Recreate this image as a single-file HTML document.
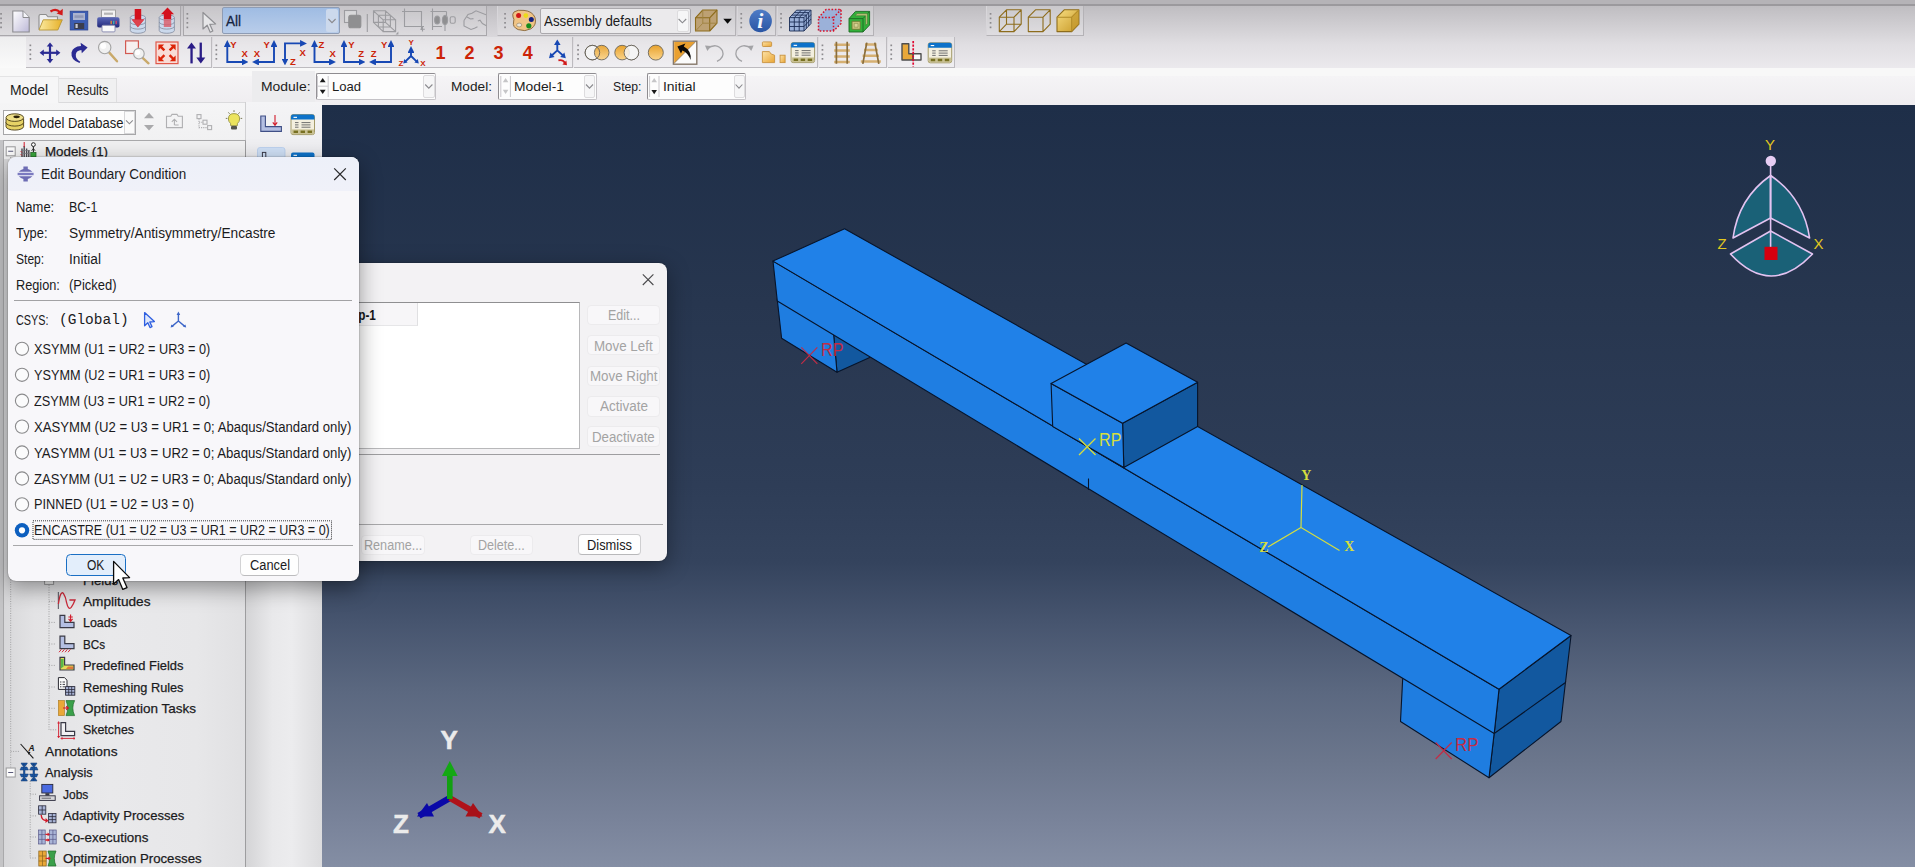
<!DOCTYPE html>
<html><head><meta charset="utf-8"><title>Abaqus/CAE</title>
<style>
html,body{margin:0;padding:0}
body{width:1915px;height:867px;position:relative;overflow:hidden;background:#f3f3f5;font-family:"Liberation Sans",sans-serif;font-size:13px;color:#1c1c1c}
.a{position:absolute}
.t{position:absolute;white-space:pre;line-height:16px;height:16px;font-size:13px;transform-origin:0 50%}
.g{color:#a3a3a3}
svg{position:absolute;overflow:visible}
#vp{left:322px;top:105px;width:1593px;height:762px;background:linear-gradient(to bottom,#1e2e48 0%,#27364f 26%,#2e3d57 50%,#34435d 60%,#47556f 68%,#5b6880 77%,#6b768c 86%,#79839a 94%,#848ea4 100%)}
.vl{position:absolute;white-space:pre;transform-origin:0 50%;font-family:"Liberation Sans",sans-serif}
.tg{box-sizing:border-box;border:1px solid #a9a7ab;border-top:none;background:rgba(255,255,255,0.12)}
.tg2{box-sizing:border-box;border:1px solid #b4b2b6;border-top:none;border-left-color:#d8d6da;background:rgba(255,255,255,0.18)}
.tg3{box-sizing:border-box;border-right:1px solid #bdbbbf;border-bottom:1.5px solid #bdbbbf;background:rgba(255,255,255,0.25)}
.cb{box-sizing:border-box;border:1px solid #aaa8ac;background:#ebeaec;border-radius:2px}
.cb2{box-sizing:border-box;border:1.5px solid #8e8c90;border-right-color:#c4c2c6;border-bottom-color:#c4c2c6;background:#fdfdfd;border-radius:2px}
.cbb{background:#f6f6f7;border:1px solid #dddcde;box-sizing:border-box;border-radius:2px}
.tr{font-size:13.5px;color:#1b1b1d;-webkit-text-stroke:0.25px #1b1b1d}
.d{font-size:14px;color:#1b1b1d}
.b2{box-sizing:border-box;border:1px solid #ecebed;border-radius:4px;background:#f8f7f9}
</style></head><body>
<!--VIEWPORT-->
<div id="vp" class="a"></div>
<svg style="left:0;top:0" width="1915" height="867" viewBox="0 0 1915 867">
<g stroke="#07142a" stroke-width="1.1" stroke-linejoin="round">
<!-- left support -->
<polygon fill="#12589f" points="833.5,333 837,372.3 908.5,340 905.5,302"/>
<polygon fill="#1f7de0" points="777.2,299 781.6,338.2 837,372.3 833.5,333"/>
<!-- right support -->
<polygon fill="#12589f" points="1494.3,732 1489,777.7 1561,721.5 1565.6,681"/>
<polygon fill="#1f7de0" points="1402.8,676.5 1400.5,721.5 1489,777.7 1494.3,732"/>
<!-- main beam -->
<polygon fill="#12589f" points="1499,689.2 1494.2,733.5 1565.5,682.5 1571,635.5"/>
<polygon fill="#1f7ee2" points="773,261.1 1499,689.2 1494.2,733.5 777.3,301"/>
<polygon fill="#2081e8" points="773,261.1 844.6,228.8 1571,635.5 1499,689.2"/>
<!-- middle block -->
<polygon fill="#12589f" points="1122.6,423.3 1197.6,382.3 1197.6,426.5 1123.8,467.6"/>
<polygon fill="#1f7ee2" points="1051.1,383.4 1122.6,423.3 1123.8,467.6 1052.7,426.5"/>
<polygon fill="#2081e8" points="1051.1,383.4 1126.1,343.1 1197.6,382.3 1122.6,423.3"/>
<line x1="1088.5" y1="478.5" x2="1088.5" y2="490"/>
</g>
<!-- RPs -->
<g stroke="#c22c46" stroke-width="1.15"><path d="M801.3,347.3 L817.3,363.8 M817.3,347.3 L801.3,363.8"/><path d="M1435.7,742.5 L1451.7,759 M1451.7,742.5 L1435.7,759"/></g>
<g stroke="#d6de3e" stroke-width="1.3"><path d="M1079,438.5 L1095.5,455 M1095.5,438.5 L1079,455"/></g>
<!-- datum csys -->
<g stroke="#d6de3e" stroke-width="1.2" fill="none"><path d="M1302,485 L1301,527.5 L1339.5,550.5 M1301,527.5 L1268,547"/></g>
<!-- view compass -->
<g stroke="#e3c3f1" stroke-width="1.6" fill="#1a6177" stroke-linejoin="round">
<path d="M1770.6,175.5 Q1738.5,198 1733,238 L1770.6,218 Z"/>
<path d="M1770.6,175.5 Q1803.5,198 1809.6,238 L1770.6,218 Z"/>
<path d="M1770.6,231 L1730.5,254 Q1771,298 1812.5,254 Z"/>
<line x1="1770.6" y1="163" x2="1770.6" y2="250"/>
</g>
<circle cx="1770.8" cy="161" r="5.2" fill="#e6cdf3"/>
<rect x="1764.5" y="246.8" width="13" height="13.2" fill="#d4000f"/>
<!-- orientation triad -->
<g>
<path d="M449.8,798 L419,815.8" stroke="#0a08a8" stroke-width="6.3"/>
<polygon points="417,816.5 434,816.5 427,803" fill="#0a08a8"/>
<path d="M449.8,798 L481,815.8" stroke="#b0121a" stroke-width="6"/>
<polygon points="482.5,816.5 465.5,816.5 473,803" fill="#a81018"/>
<rect x="447" y="775" width="5.6" height="24" fill="#12a012"/>
<polygon points="449.8,761 442,776 457.6,776" fill="#14a814"/>
</g>
</svg>
<span class="vl" style="left:821px;top:340px;font-size:18px;line-height:20px;color:#c22c46;transform:scaleX(0.8994)">RP</span>
<span class="vl" style="left:1455px;top:735px;font-size:18px;line-height:20px;color:#c22c46;transform:scaleX(0.9394)">RP</span>
<span class="vl" style="left:1099px;top:430px;font-size:18px;line-height:20px;color:#d6de3e;transform:scaleX(0.8994)">RP</span>
<span class="vl" style="left:1301.2px;top:469px;font-family:'Liberation Serif',serif;font-weight:bold;font-size:14px;line-height:14px;color:#d6de3e">Y</span>
<span class="vl" style="left:1344.3px;top:540.3px;font-family:'Liberation Serif',serif;font-weight:bold;font-size:14px;line-height:14px;color:#d6de3e">X</span>
<span class="vl" style="left:1259.2px;top:541px;font-family:'Liberation Serif',serif;font-weight:bold;font-size:14px;line-height:14px;color:#d6de3e">Z</span>
<span class="vl" style="left:1765px;top:137px;font-size:15px;line-height:16px;color:#e2c81e">Y</span>
<span class="vl" style="left:1717.5px;top:235.5px;font-size:15px;line-height:16px;color:#e2c81e">Z</span>
<span class="vl" style="left:1813.5px;top:235.5px;font-size:15px;line-height:16px;color:#e2c81e">X</span>
<span class="vl" style="left:440.4px;top:726px;font-size:26px;line-height:28px;font-weight:bold;color:#ebebeb;-webkit-text-stroke:0.5px #ebebeb">Y</span>
<span class="vl" style="left:393px;top:809.5px;font-size:26px;line-height:28px;font-weight:bold;color:#ebebeb;-webkit-text-stroke:0.5px #ebebeb">Z</span>
<span class="vl" style="left:488.6px;top:809.5px;font-size:26px;line-height:28px;font-weight:bold;color:#ebebeb;-webkit-text-stroke:0.5px #ebebeb">X</span>
<!--TOOLBARS-->
<div class="a" style="left:0;top:0;width:1915px;height:4px;background:#b5b3b7"></div>
<div class="a" style="left:0;top:4px;width:1915px;height:1.5px;background:#9b999d"></div>
<div class="a" style="left:0;top:5.5px;width:1915px;height:62.5px;background:linear-gradient(to bottom,#bfbdc1 0%,#cfcdd1 30%,#e0dee2 62%,#ebe9ed 100%)"></div>
<div class="a" style="left:0;top:68px;width:1915px;height:8px;background:#f8f8f8"></div>
<div class="a" style="left:0;top:76px;width:1915px;height:29px;background:linear-gradient(to bottom,#f5f4f6,#efedf0)"></div>
<!-- row1 groups -->
<div class="a tg" style="left:-2px;top:5.5px;width:183px;height:30px"></div>
<div class="a tg" style="left:183px;top:5.5px;width:304px;height:30px"></div>
<div class="a tg2" style="left:497px;top:5.5px;width:238.5px;height:30px"></div>
<div class="a tg2" style="left:736.5px;top:5.5px;width:39px;height:30px"></div>
<div class="a tg2" style="left:776.5px;top:5.5px;width:97px;height:30px"></div>
<div class="a tg2" style="left:986px;top:5.5px;width:97.5px;height:30px"></div>
<!-- row2 groups -->
<div class="a" style="left:0;top:37px;width:26px;height:31px;background:linear-gradient(to bottom,#eeeeef,#fafafa)"></div>
<div class="a tg3" style="left:26px;top:37px;width:185.5px;height:30.5px"></div>
<div class="a tg3" style="left:212.5px;top:37px;width:360px;height:30.5px"></div>
<div class="a tg3" style="left:573.5px;top:37px;width:244px;height:30.5px"></div>
<div class="a tg3" style="left:818.5px;top:37px;width:68px;height:30.5px"></div>
<div class="a tg3" style="left:887.5px;top:37px;width:67.5px;height:30.5px"></div>
<!-- combos -->
<div class="a" style="left:221.5px;top:7px;width:118px;height:27px;box-sizing:border-box;border:1px solid #8e9cb4;background:linear-gradient(to bottom,#9fbce3,#b9cdea);border-radius:2px"></div>
<div class="a" style="left:326px;top:9px;width:12px;height:23px;background:#ccd9ec;border-radius:2px"></div>
<span class="t" style="left:226px;top:12.5px;font-size:14.5px;color:#15233f;-webkit-text-stroke:0.3px #15233f;transform:scaleX(0.9302)">All</span>
<div class="a cb" style="left:539.5px;top:7.5px;width:151.5px;height:26.5px"></div>
<div class="a cbb" style="left:676.5px;top:9.5px;width:12px;height:22.5px"></div>
<span class="t" style="left:543.5px;top:13px;font-size:14px;transform:scaleX(0.9506)">Assembly defaults</span>
<div class="a cb2" style="left:315.5px;top:73px;width:120.5px;height:26.5px"></div>
<div class="a cbb" style="left:423px;top:75px;width:11.5px;height:22.5px"></div>
<div class="a cb2" style="left:498px;top:73px;width:98.5px;height:26.5px"></div>
<div class="a cbb" style="left:584px;top:75px;width:11px;height:22.5px"></div>
<div class="a cb2" style="left:647px;top:73px;width:99px;height:26.5px"></div>
<div class="a cbb" style="left:733.5px;top:75px;width:11px;height:22.5px"></div>
<div class="a" style="left:252px;top:71px;width:63px;height:32px;background:#ececee"></div>
<span class="t" style="left:260.5px;top:78.5px;transform:scaleX(1.0703)">Module:</span>
<span class="t" style="left:332px;top:78.5px;transform:scaleX(1.0027)">Load</span>
<span class="t" style="left:451px;top:78.5px;transform:scaleX(1.0504)">Model:</span>
<span class="t" style="left:514px;top:78.5px;transform:scaleX(1.0645)">Model-1</span>
<span class="t" style="left:612.5px;top:78.5px;transform:scaleX(0.9388)">Step:</span>
<span class="t" style="left:663px;top:78.5px;transform:scaleX(1.0705)">Initial</span>
<svg style="left:0;top:0" width="1915" height="105" viewBox="0 0 1915 105">
<defs>
<linearGradient id="gO" x1="0" y1="0" x2="0" y2="1"><stop offset="0" stop-color="#e8a22c"/><stop offset="1" stop-color="#fbd48a"/></linearGradient>
<linearGradient id="gO2" x1="0" y1="0" x2="1" y2="1"><stop offset="0" stop-color="#fde3a8"/><stop offset="1" stop-color="#e9a534"/></linearGradient>
<linearGradient id="gP" x1="0" y1="0" x2="1" y2="1"><stop offset="0" stop-color="#ffffff"/><stop offset="1" stop-color="#bdb9d8"/></linearGradient>
<linearGradient id="gF" x1="0" y1="0" x2="1" y2="0"><stop offset="0" stop-color="#fbeaa0"/><stop offset="1" stop-color="#e6b028"/></linearGradient>
<linearGradient id="gPr" x1="0" y1="0" x2="0" y2="1"><stop offset="0" stop-color="#5a68b8"/><stop offset="1" stop-color="#22287a"/></linearGradient>
<linearGradient id="gI" x1="0" y1="0" x2="0" y2="1"><stop offset="0" stop-color="#4f7cc6"/><stop offset="1" stop-color="#2a55a4"/></linearGradient>
<linearGradient id="gG" x1="0" y1="0" x2="1" y2="1"><stop offset="0" stop-color="#f6dc80"/><stop offset="1" stop-color="#c89a28"/></linearGradient>
<g id="hd" fill="#8c8a8e"><rect x="-0.8" y="0" width="1.7" height="1.7"/><rect x="-0.8" y="4.5" width="1.7" height="1.7"/><rect x="-0.8" y="9" width="1.7" height="1.7"/><rect x="-0.8" y="13.5" width="1.7" height="1.7"/></g>
<g id="win"><rect x="0" y="0" width="23.5" height="20" rx="2" fill="#f3efdf" stroke="#a39a68" stroke-width="1"/><path d="M0,5 V2 Q0,0 2,0 H21.5 Q23.5,0 23.5,2 V5 Z" fill="#0d72c9"/><rect x="2.5" y="2.2" width="3.5" height="1.1" fill="#fff"/><rect x="0.5" y="14.8" width="22.5" height="4.7" fill="#c9c193"/><rect x="2.6" y="16" width="4.4" height="2.4" fill="#787022"/><rect x="9.6" y="16" width="4.4" height="2.4" fill="#787022"/><rect x="16.6" y="16" width="4.4" height="2.4" fill="#787022"/><path d="M4,8 H7.5 M4,10.3 H7.5 M4,12.6 H7.5 M10.5,8 H19.5 M10.5,10.3 H19.5 M10.5,12.6 H19.5" stroke="#6f6f6f" stroke-width="1"/></g>
</defs>
<!-- handles row1 -->
<use href="#hd" x="1" y="13"/><use href="#hd" x="187.3" y="13"/><use href="#hd" x="505" y="13"/><use href="#hd" x="741.2" y="13"/><use href="#hd" x="781" y="13"/><use href="#hd" x="990.5" y="13"/>
<!-- handles row2 -->
<use href="#hd" x="30.3" y="44.5"/><use href="#hd" x="216.3" y="44.5"/><use href="#hd" x="578" y="44.5"/><use href="#hd" x="822.4" y="44.5"/><use href="#hd" x="891.2" y="44.5"/>
<!-- new -->
<path d="M12.8,11 H23 L29.2,17.5 V32 H12.8 Z" fill="url(#gP)" stroke="#8b8b8f" stroke-width="1.1"/><path d="M23,11 V17.5 H29.2" fill="#f4f4f8" stroke="#8b8b8f" stroke-width="1"/>
<!-- open -->
<path d="M39,29.5 V16 Q39,14.5 40.5,14.5 H46 L48,16.8 H57.5 V20" fill="#efeff1" stroke="#8d8d8d" stroke-width="1.1"/>
<path d="M39,30 L43.2,19.8 H62.3 L57.8,30 Z" fill="url(#gF)" stroke="#b59436" stroke-width="0.9"/>
<path d="M50.5,11.5 Q56,7.8 60,12.2" fill="none" stroke="#d21a1a" stroke-width="2.2"/><polygon points="62.8,8.8 62.6,15.6 56.6,13.4" fill="#d21a1a"/>
<!-- save -->
<rect x="70.2" y="11.2" width="17.6" height="18.8" fill="#3c5db2" stroke="#2b4592" stroke-width="0.8"/><rect x="73" y="13" width="12" height="7" fill="#aab3cf"/><rect x="74.5" y="15.3" width="9" height="2.6" fill="#8f98b6"/><rect x="74.2" y="23" width="10" height="6" fill="#3b3d4d"/><rect x="75.5" y="24" width="2.2" height="4" fill="#c8cbd8"/>
<!-- print -->
<rect x="101.5" y="10" width="14" height="7.5" fill="#f2f2f2" stroke="#9a9a9a" stroke-width="0.9"/><rect x="104" y="12.6" width="9" height="2.2" fill="#b5b5b5"/>
<rect x="97.2" y="17.2" width="22.3" height="10.3" rx="1.8" fill="url(#gPr)"/><rect x="110.5" y="20.8" width="1.4" height="3.4" fill="#e0883a"/><rect x="113" y="20.8" width="1.4" height="3.4" fill="#3ab0b0"/><rect x="115.5" y="20.8" width="1.4" height="3.4" fill="#d04a6a"/>
<rect x="102" y="25.3" width="13" height="6.6" rx="1" fill="#fafafa" stroke="#8e90b4" stroke-width="1"/>
<!-- db down -->
<g stroke="#8a93a6" stroke-width="0.9" fill="#cbd9ec"><path d="M130.3,17.5 V30.5 A7.6,2.8 0 0 0 145.5,30.5 V17.5"/><ellipse cx="137.9" cy="17.5" rx="7.6" ry="2.6"/><path d="M130.3,22 A7.6,2.8 0 0 0 145.5,22 M130.3,26.3 A7.6,2.8 0 0 0 145.5,26.3" fill="none"/></g>
<path d="M134.7,9 H141.2 V19.5 H144.2 L137.9,27.2 L131.7,19.5 H134.7 Z" fill="#d3101c"/><path d="M131.7,19.5 H144.2 L137.9,27.2 Z" fill="#e25460" opacity="0.75"/>
<!-- db up -->
<g stroke="#8a93a6" stroke-width="0.9" fill="#cbd9ec"><path d="M159.2,17.5 V30.5 A7.6,2.8 0 0 0 174.4,30.5 V17.5"/><ellipse cx="166.8" cy="17.5" rx="7.6" ry="2.6"/><path d="M159.2,22 A7.6,2.8 0 0 0 174.4,22 M159.2,26.3 A7.6,2.8 0 0 0 174.4,26.3" fill="none"/></g>
<path d="M167.5,7.5 L174,14.2 H171.2 V19 H163.8 V14.2 H161 Z" fill="#d3101c"/><rect x="163.8" y="19" width="7.4" height="8" fill="#dc5a68" opacity="0.8"/>
<!-- cursor -->
<path d="M203,12.5 L203,29 L207.2,25.2 L210.2,32.2 L212.8,31 L209.8,24.3 L215.6,24 Z" fill="#e6e6e8" stroke="#8f8f93" stroke-width="1.2" stroke-linejoin="round"/>
<!-- combo arrows -->
<g fill="none" stroke="#8a8a8e" stroke-width="1.1"><path d="M328.4,19 L332,22.6 L335.6,19"/><path d="M678.6,19 L682.4,22.8 L686.2,19"/><path d="M425.2,84.5 L428.8,88.2 L432.4,84.5"/><path d="M586,84.5 L589.5,88.2 L593,84.5"/><path d="M735.6,84.5 L739,88.2 L742.4,84.5"/></g>
<!-- greyed icons -->
<g fill="none" stroke="#9c9ca0" stroke-width="1.1">
<rect x="344.5" y="10.5" width="12" height="12" fill="#d8d8da"/><rect x="348.8" y="15.2" width="12" height="12.5" rx="2" fill="#8f8f91" stroke="#8f8f91"/>
<path d="M367.3,14 V32"/>
<path d="M373.5,10.8 H385.5 V22.4 H373.5 Z M383.2,19.8 H395.6 V31.6 H383.2 Z M373.5,10.8 L383.2,19.8 M385.5,10.8 L395.6,19.8 M373.5,22.4 L383.2,31.6 M385.5,22.4 L395.6,31.6 M378.4,15.2 H390.4 V27 H378.4 Z"/><polygon points="398.4,31.6 398.4,34.4 395.6,34.4" fill="#9c9ca0" stroke="none"/>
<path d="M404.5,8.5 V26.5 H424 M402,11.5 H421.5 V30 M422.5,27 v4.5 M420.3,29.2 h4.5" />
<path d="M432.5,8.5 V30 M430.5,11.5 H446.5 M433,26.5 H442 M446.5,11.5 V16" /><ellipse cx="437.2" cy="20" rx="2.6" ry="4" fill="#8f8f91"/><ellipse cx="445" cy="20" rx="2.6" ry="4.6" fill="#8f8f91"/><path d="M445,24 V31"/><rect x="450.2" y="16.8" width="5" height="6.4" rx="1.5"/>
<path d="M464,20.5 L468,14.5 L472,13.2 L476,10.8 L486,14.8 M464,20.5 V26 L471,29.5 L474.5,28.3 L477.5,26.8 M467,17 L470.5,19 L473.5,18.6 M477.8,21 L480,20.2 L482.4,23.6 L486.4,25.8"/>
</g>
<!-- palette -->
<path d="M514,12 Q517.5,9.4 524,10.4 Q532.5,11.2 535,17.6 Q537,25 531,28.8 Q525,32 518.2,29.6 Q512.2,27 513.6,22 Q514.6,19.2 513,17 Q512,14 514,12 Z" fill="#f0c486" stroke="#8e6d42" stroke-width="1"/>
<circle cx="518.6" cy="15.6" r="2.5" fill="#d01818"/><circle cx="525.8" cy="15.6" r="2.4" fill="#ecdc18"/><circle cx="531.3" cy="19.6" r="2.5" fill="#12207e"/><circle cx="528.8" cy="25.8" r="2.6" fill="#168c1c"/><ellipse cx="519.2" cy="25" rx="2.6" ry="1.9" fill="#ece6da" stroke="#9b8a6a" stroke-width="0.7"/>
<!-- brown cube -->
<g stroke="#8d6c1c" stroke-width="1.1" fill="#bda173" stroke-linejoin="round"><path d="M695.5,17.8 L702.8,10 H717 V23.2 L709.7,31 H695.5 Z"/><path d="M695.5,17.8 H709.7 V31 M709.7,17.8 L717,10" fill="none"/><path d="M702.8,10 V23.2 H717 M702.8,23.2 L695.5,31" fill="none" stroke="#9f8240" stroke-width="0.9"/></g>
<polygon points="723.3,18.8 731.9,18.8 727.6,23.8" fill="#0a0a0a"/>
<!-- info -->
<circle cx="760.6" cy="20.9" r="11.3" fill="url(#gI)"/><text x="757.2" y="28.4" font-family="Liberation Serif,serif" font-style="italic" font-weight="bold" font-size="22" fill="#f4f6fb">i</text>
<!-- mesh cube 1 -->
<g stroke="#1b2c55" stroke-width="0.9" fill="#9bb1d9" stroke-linejoin="round"><path d="M789.5,17.6 L796.5,10.2 H811 V23.5 L804,31 H789.5 Z"/><path d="M789.5,17.6 H804 V31 M804,17.6 L811,10.2 M794.3,17.6 V31 M799.2,17.6 V31 M789.5,22 H804 L811,14.6 M789.5,26.5 H804 L811,19.1 M794.3,17.6 L801.3,10.2 M799.2,17.6 L806.2,10.2 M791.8,15.1 H806.3 V28.5 M794.2,12.6 H808.7 V26" fill="none"/></g>
<!-- mesh cube 2 -->
<g stroke-linejoin="round"><path d="M818.5,17.6 L826,9.6 H841 V23.5 L833.5,31 H818.5 Z" fill="#9bb1d9" stroke="none"/><path d="M818.5,17.6 L826,9.6 H841 V23.5 L833.5,31 H818.5 Z M818.5,17.6 H833.5 V31 M833.5,17.6 L841,9.6" fill="none" stroke="#d8122a" stroke-width="1.5" stroke-dasharray="1.6 1.7"/></g>
<!-- green cube -->
<g stroke="#1c6a22" stroke-width="0.9" stroke-linejoin="round"><path d="M849,18.6 L855.5,11.4 H869.6 V25 L863,32 H849 Z" fill="#32b03a"/><path d="M849,18.6 H863 V32 M863,18.6 L869.6,11.4" fill="none"/><rect x="852" y="21.3" width="8.2" height="8" fill="#c9c47c" stroke="#6d7b32"/><rect x="854.2" y="23.4" width="3.8" height="3.8" fill="#d8d494" stroke="#8a8a4a" stroke-width="0.6"/><path d="M857,13.6 H867.4 V23.5 L865.6,25.6 V15.8 H855.2 Z" fill="#bdc27a" stroke="#46843a" stroke-width="0.7"/></g>
<!-- render cubes -->
<g stroke="#8d6c1c" stroke-width="1.1" fill="none" stroke-linejoin="round"><path d="M999.3,17.2 L1006.5,9.8 H1021.2 V24.2 L1014,31.6 H999.3 Z M999.3,17.2 H1014 V31.6 M1014,17.2 L1021.2,9.8 M1006.5,9.8 V24.2 H1021.2 M1006.5,24.2 L999.3,31.6"/>
<path d="M1028.3,17.2 L1035.5,9.8 H1050.2 V24.2 L1043,31.6 H1028.3 Z M1028.3,17.2 H1043 V31.6 M1043,17.2 L1050.2,9.8"/>
<path d="M1057,17.2 L1064.2,9.8 H1078.9 V24.2 L1071.7,31.6 H1057 Z" fill="url(#gG)"/><path d="M1057,17.2 H1071.7 V31.6 M1071.7,17.2 L1078.9,9.8" stroke="#b08a28"/><path d="M1071.7,17.2 L1078.9,9.8 V24.2 L1071.7,31.6 Z" fill="#c09428" stroke="none" opacity="0.55"/></g>
</svg>
<svg style="left:0;top:0" width="1915" height="105" viewBox="0 0 1915 105">
<defs>
<marker id="mb" viewBox="0 0 10 10" refX="5" refY="5" markerWidth="3.6" markerHeight="3.6" orient="auto-start-reverse"><path d="M0,0 L10,5 L0,10 z" fill="#1748b4"/></marker>
</defs>
<!-- move -->
<g fill="#2b2b93" stroke="none"><rect x="48.9" y="45" width="2.2" height="15.6"/><rect x="42" y="51.7" width="16" height="2.2"/><polygon points="50,42.4 53.3,46.6 46.7,46.6"/><polygon points="50,63.2 53.3,59 46.7,59"/><polygon points="39.6,52.8 43.8,49.5 43.8,56.1"/><polygon points="60.4,52.8 56.2,49.5 56.2,56.1"/></g>
<!-- rotate -->
<path d="M79.5,63 Q70.5,60 71.5,52.5 Q73,46.5 81,46 L80.6,42.8 L87.6,47.6 L81.8,53.2 L81.4,50 Q76.5,50.3 75.8,54.4 Q75.4,58.6 80.3,61.8 Z" fill="#2b2b93"/>
<!-- magnifier -->
<path d="M109.3,52.6 L117,61.3" stroke="#c9a96a" stroke-width="2.4" stroke-linecap="round"/><circle cx="104.7" cy="47.6" r="6.2" fill="#f0f0f0" stroke="#a4a4a4" stroke-width="1.1"/><circle cx="103.2" cy="46" r="3" fill="#ffffff" opacity="0.9"/>
<!-- box zoom -->
<rect x="125.6" y="40.9" width="12.8" height="12.6" fill="#f6f0f0" stroke="#d25a52" stroke-width="1.2"/><path d="M142.6,57.8 L148.5,63.3" stroke="#c9a96a" stroke-width="2.4" stroke-linecap="round"/><circle cx="138.9" cy="53.7" r="5.3" fill="#f0f0f0" stroke="#a4a4a4" stroke-width="1.1"/><circle cx="137.6" cy="52.4" r="2.6" fill="#fff" opacity="0.9"/>
<!-- fit -->
<rect x="156" y="42" width="22" height="21.6" fill="#f8dcd6" stroke="#e0584a" stroke-width="1.2"/>
<g fill="#dc2408"><polygon points="158.4,44.4 164.2,44.4 158.4,50.2"/><polygon points="175.6,44.4 169.8,44.4 175.6,50.2"/><polygon points="158.4,61.2 164.2,61.2 158.4,55.4"/><polygon points="175.6,61.2 169.8,61.2 175.6,55.4"/></g><path d="M160.6,46.6 L164.4,50.4 M173.4,46.6 L169.6,50.4 M160.6,59 L164.4,55.2 M173.4,59 L169.6,55.2" stroke="#dc2408" stroke-width="2.4"/>
<!-- updown -->
<g fill="#2a1c86"><rect x="190.4" y="46" width="2.3" height="17.4"/><polygon points="191.5,42.4 196,48.6 187,48.6"/><rect x="199.6" y="42.6" width="2.3" height="17"/><polygon points="200.8,63.6 205.3,57.4 196.3,57.4"/></g>
<!-- view icons -->
<g fill="none" stroke="#1748b4" stroke-width="1.9">
<path d="M227.3,43.5 V62 H245" marker-start="url(#mb)" marker-end="url(#mb)"/>
<path d="M274,43.5 V62 H255.5" marker-start="url(#mb)" marker-end="url(#mb)"/>
<path d="M303.5,43.4 H285 V62" marker-start="url(#mb)" marker-end="url(#mb)"/>
<path d="M314.5,43.5 V62 H332.5" marker-start="url(#mb)" marker-end="url(#mb)"/>
<path d="M344,43.5 V62 H362" marker-start="url(#mb)" marker-end="url(#mb)"/>
<path d="M391,43.5 V62 H372.5" marker-start="url(#mb)" marker-end="url(#mb)"/>
<path d="M411,49.5 V56 L405.2,61.6 M411,56 L416.8,61.6" marker-start="url(#mb)"/>
<path d="M557.3,43 V50.4 L551.2,56 M557.3,50.4 L563.6,56"/>
</g>
<g fill="#1748b4"><polygon points="403.2,63.6 404.2,59 407.6,62.4"/><polygon points="418.8,63.6 417.8,59 414.4,62.4"/><polygon points="557.3,39.6 560.6,45 554,45"/><polygon points="549,58.2 550.4,52.6 554.6,57"/><polygon points="565.8,58.2 564.4,52.6 560.2,57"/></g>
<path d="M558.4,60.4 Q562.6,59.2 565,63" fill="none" stroke="#d21a1a" stroke-width="1.8"/><polygon points="567,65.2 562.4,64.4 566.4,60.6" fill="#d21a1a"/>
<g font-family="Liberation Sans,sans-serif" font-weight="bold" fill="#cc2408" font-size="9.5">
<text x="230.2" y="48.3">Y</text><text x="241.6" y="56.6">X</text>
<text x="263.6" y="48.3">Y</text><text x="253.8" y="56.6">X</text>
<text x="299.6" y="55.6">X</text><text x="290" y="65.3">Z</text>
<text x="318.6" y="48.3">Z</text><text x="329.6" y="56.6">X</text>
<text x="348.2" y="48.3">Y</text><text x="358.2" y="56.6">Z</text>
<text x="381" y="48.3">Y</text><text x="370.8" y="56.6">Z</text>
<text x="408.4" y="44.6" font-size="8">Y</text><text x="398.4" y="66" font-size="8">Z</text><text x="420.2" y="66" font-size="8">X</text>
</g>
<g font-family="Liberation Sans,sans-serif" font-weight="bold" fill="#cc2408" font-size="18"><text x="435.4" y="59.4">1</text><text x="464.4" y="59.4">2</text><text x="493.5" y="59.4">3</text><text x="522.8" y="59.4">4</text></g>
<!-- circles -->
<g stroke="#6b665c" stroke-width="0.9"><circle cx="592.4" cy="52.6" r="7.3" fill="#f4f4f4"/><circle cx="601.7" cy="52.6" r="7.3" fill="url(#gO)" fill-opacity="0.92"/><circle cx="592.4" cy="52.6" r="7.3" fill="none"/>
<circle cx="631.4" cy="52.6" r="7.3" fill="#f4f4f4"/><circle cx="622.1" cy="52.6" r="7.3" fill="url(#gO)"/><circle cx="631.4" cy="52.6" r="7.3" fill="#f4f4f4" fill-opacity="0.85"/>
<circle cx="655.8" cy="52.6" r="7.5" fill="url(#gO)"/></g>
<!-- selected tool -->
<rect x="673.4" y="41.2" width="23.4" height="23" fill="#fbfbfb" stroke="#86786a" stroke-width="1.4"/><polygon points="674.2,42 695.4,42 674.2,63.2" fill="#e9a030"/><path d="M674.2,63.2 L695.4,42" stroke="#86786a" stroke-width="0.8"/>
<path d="M690.6,60 Q691.6,50.6 683.8,46.6 L685.4,43.6 L677.4,46.4 L681,53.6 L682.4,50.4 Q688.4,53 690.6,60 Z" fill="#0a0a0a"/>
<!-- undo redo -->
<g fill="none" stroke="#a3a3a6" stroke-width="1.3"><path d="M707,48.6 Q717,42 722.4,50.6 Q725,57.6 717,61.4"/><path d="M752,48.6 Q742,42 736.4,50.6 Q734,57.6 742,61.4"/></g><polygon points="705,45.6 711,46 707.4,51" fill="#a3a3a6"/><polygon points="753.6,45.6 747.6,46 751.2,51" fill="#a3a3a6"/>
<!-- shapes -->
<g fill="url(#gO2)" stroke="#c8923e" stroke-width="0.9"><rect x="762.4" y="41.9" width="9.2" height="4.6" rx="0.8"/><path d="M762.4,51.6 H769.4 Q770.2,54.6 774.6,55.2 V62.6 H762.4 Z"/><rect x="780.1" y="55.2" width="5" height="7.4"/></g>
<use href="#win" x="791.1" y="42.6"/>
<!-- ladders -->
<g stroke="#d6b072" stroke-width="2.5"><path d="M834.2,44.8 H849.8 M834.2,50.6 H849.8 M834.2,56.6 H849.8 M834.2,62 H849.8"/><path d="M865,44.6 H876.6 M864,50 H877.8 M862.6,55.8 H879 M860.8,61.6 H880.8"/></g>
<g stroke="#8a6e3c" stroke-width="1.7"><path d="M836.4,41.8 V63.8 M847.2,41.8 V63.8"/><path d="M866.8,42.6 L862.8,63.8 M874.8,42.6 L878.8,63.8"/></g>
<!-- L icon -->
<path d="M902,43.8 H908.8 V53.8 H913.2 V60 H902 Z" fill="#e8a83a" stroke="#4e4e4e" stroke-width="1.4" stroke-linejoin="round"/><path d="M913.2,53.8 H921 V60 H913.2 Z" fill="#fbfbfb" stroke="#4e4e4e" stroke-width="1.4" stroke-linejoin="round"/><path d="M913.2,41 V66.8" stroke="#e00832" stroke-width="1.7" stroke-dasharray="2.2 1.4"/>
<use href="#win" x="928.2" y="42.8"/>
<!-- spinners -->
<g fill="#1a1a1a"><polygon points="322.7,78 325.6,82.2 319.8,82.2"/><polygon points="322.7,94 325.6,89.8 319.8,89.8"/><polygon points="654.2,94.2 657,90 651.4,90"/></g>
<g fill="#c6c6c8"><polygon points="505.6,78 508.4,82.2 502.8,82.2"/><polygon points="505.6,94 508.4,89.8 502.8,89.8"/><polygon points="654.2,78 657,82.2 651.4,82.2"/></g>
<g fill="none" stroke="#c9c7cb" stroke-width="1"><path d="M317.4,76 V97 M328.2,76 V97 M317.4,86.2 H328.2"/><path d="M500.8,76 V97 M510.4,76 V97"/><path d="M649.6,76 V97 M659,76 V97"/></g>
</svg>
<!-- left panel -->
<div class="a" style="left:0;top:102px;width:246px;height:765px;background:linear-gradient(to right,#d6d6d8 0,#e3e3e5 14%,#e9e9eb 45%,#e7e7e9 80%,#e0e0e2 100%)"></div>
<div class="a" style="left:0;top:102px;width:246px;height:40px;background:linear-gradient(to bottom,#f5f5f6,#f1f1f2)"></div>
<div class="a" style="left:0;top:140px;width:3.5px;height:727px;background:#c4c4c6"></div>
<div class="a" style="left:246px;top:105px;width:76px;height:762px;background:linear-gradient(to right,#d4d4d6 0,#e9e9eb 35%,#ececee 60%,#dcdcde 100%)"></div>
<div class="a" style="left:246px;top:102px;width:76px;height:56px;background:linear-gradient(to bottom,#f4f4f6,#ededf0)"></div>
<div class="a" style="left:0;top:101.5px;width:246px;height:1px;background:#dadadc"></div>
<div class="a" style="left:245px;top:102px;width:1.2px;height:38px;background:#d0d0d2"></div><div class="a" style="left:245px;top:140px;width:1.2px;height:727px;background:#9d9d9f"></div>
<!-- tabs -->
<div class="a" style="left:58px;top:78px;width:59px;height:24px;box-sizing:border-box;border:1px solid #dededf;border-bottom:none;background:#f0f0f1"></div>
<div class="a" style="left:0;top:75.5px;width:58.5px;height:27px;box-sizing:border-box;border:1px solid #e4e4e5;border-bottom:none;border-left:none;background:#f6f6f7"></div>
<span class="t" style="left:9.5px;top:81.5px;font-size:14px;transform:scaleX(0.9963)">Model</span>
<span class="t" style="left:67px;top:82px;font-size:14px;transform:scaleX(0.8889)">Results</span>
<!-- model database combo -->
<div class="a" style="left:2.5px;top:109.5px;width:133.5px;height:25px;box-sizing:border-box;border:1px solid #a6a6a8;background:#fdfdfd"></div>
<div class="a" style="left:123.8px;top:110.5px;width:11px;height:23px;box-sizing:border-box;border:1px solid #d6d6d8;background:#fafafa"></div>
<span class="t" style="left:28.5px;top:114.5px;font-size:14px;transform:scaleX(0.9269)">Model Database</span>
<!-- tree box -->
<div class="a" style="left:2.5px;top:140px;width:243px;height:727px;box-sizing:border-box;border:1px solid #a9a9ab;border-bottom:none;border-right:none"></div>
<div class="a" style="left:3.5px;top:141px;width:241.5px;height:18px;background:#f0f0f1"></div>
<span class="t tr" style="left:44.5px;top:144.0px;transform:scaleX(0.9878)">Models (1)</span>
<span class="t tr" style="left:83px;top:572.5px;transform:scaleX(0.9718)">Fields</span>
<span class="t tr" style="left:83px;top:593.8px;transform:scaleX(1.0105)">Amplitudes</span>
<span class="t tr" style="left:83px;top:615.0px;transform:scaleX(0.9240)">Loads</span>
<span class="t tr" style="left:83px;top:636.7px;transform:scaleX(0.8622)">BCs</span>
<span class="t tr" style="left:83px;top:658.0px;transform:scaleX(0.9566)">Predefined Fields</span>
<span class="t tr" style="left:83px;top:679.5px;transform:scaleX(0.9431)">Remeshing Rules</span>
<span class="t tr" style="left:83px;top:700.9px;transform:scaleX(0.9996)">Optimization Tasks</span>
<span class="t tr" style="left:83px;top:722.3px;transform:scaleX(0.9184)">Sketches</span>
<span class="t tr" style="left:44.6px;top:743.9px;transform:scaleX(1.0167)">Annotations</span>
<span class="t tr" style="left:44.6px;top:765.1px;transform:scaleX(0.9487)">Analysis</span>
<span class="t tr" style="left:63.3px;top:786.7px;transform:scaleX(0.8867)">Jobs</span>
<span class="t tr" style="left:63.3px;top:808.4px;transform:scaleX(0.9680)">Adaptivity Processes</span>
<span class="t tr" style="left:63.3px;top:829.5px;transform:scaleX(0.9896)">Co-executions</span>
<span class="t tr" style="left:63.3px;top:850.8px;transform:scaleX(0.9773)">Optimization Processes</span>
<svg style="left:0;top:0" width="330" height="867" viewBox="0 0 330 867">
<!-- db stack icon -->
<g stroke="#4a3c14" stroke-width="0.9" fill="#e6d266"><path d="M6,122 V126.5 A8.8,3.6 0 0 0 23.6,126.5 V122"/><path d="M6,118.5 V122.5 A8.8,3.6 0 0 0 23.6,122.5 V118.5"/><ellipse cx="14.8" cy="117.6" rx="8.8" ry="3.8" fill="#efe08a"/><ellipse cx="16.6" cy="116.8" rx="3.2" ry="1.4" fill="#2a2008" stroke="none"/></g>
<path d="M126,120.4 L129.4,123.8 L132.8,120.4" fill="none" stroke="#8a8a8e" stroke-width="1.1"/>
<polygon points="149,112.8 154,118.2 144,118.2" fill="#a9a9ab"/><polygon points="149,130.4 154,125 144,125" fill="#a9a9ab"/>
<g fill="none" stroke="#b0b0b2" stroke-width="1.1"><path d="M166.5,127.6 V116.2 H170.8 L172,114.4 H177 L178.2,116.2 H182.4 V127.6 Z"/><path d="M174.4,125 V119.4 M171.8,121.8 L174.4,119.2 L177,121.8 M174.4,125 H178.6"/>
<rect x="197" y="114.6" width="4" height="4"/><rect x="203" y="120.2" width="4" height="4"/><rect x="207.6" y="125.6" width="4" height="4"/><path d="M199,118.6 V127.6 H207.6 M199,122.2 H203" stroke-dasharray="1.2 1"/></g>
<!-- bulb -->
<path d="M234,113.6 Q239.6,113.6 239.6,119 Q239.6,121.6 237.4,123.6 V125.6 H230.6 V123.6 Q228.4,121.6 228.4,119 Q228.4,113.6 234,113.6 Z" fill="#ece45e" stroke="#8e8a3a" stroke-width="0.8"/><rect x="231" y="126" width="6" height="3.6" rx="1" fill="#55554f"/><path d="M234,110.2 V112 M228.4,112.4 L229.6,113.8 M239.6,112.4 L238.4,113.8 M225.8,118.4 H227.4 M240.6,118.4 H242.2" stroke="#6e6e48" stroke-width="0.9"/>
<!-- toolbox -->
<path d="M260.8,116 H265.4 V126.6 H281.4 V131.4 H260.8 Z" fill="#b4bfe2" stroke="#3f4f86" stroke-width="1.1"/><path d="M275,115 V125 M272.8,122.4 L275,125.4 L277.2,122.4" fill="none" stroke="#d21a2a" stroke-width="1.1"/>
<use href="#win" x="291" y="114.6"/>
<rect x="257.5" y="147.5" width="27.5" height="14" rx="2.5" fill="#cfe0f6" stroke="#b5cdee" stroke-width="0.8"/><rect x="262.4" y="152.4" width="3.4" height="6" fill="none" stroke="#3a3a4a" stroke-width="1"/>
<path d="M291,159 V154.6 Q291,152.6 293,152.6 H312.5 Q314.5,152.6 314.5,154.6 V159 Z" fill="#0d72c9"/><rect x="293.5" y="154.8" width="3.5" height="1.1" fill="#fff"/>
<!-- tree dotted lines -->
<g stroke="#a0a0a2" stroke-width="1" stroke-dasharray="1 1.4" fill="none"><path d="M10.7,157 V767.5"/><path d="M10.7,751.4 H19"/><path d="M49,160 V729.8 H57 M49,601.3 H56 M49,622.4 H56 M49,644 H56 M49,665.4 H56 M49,687 H56 M49,708.3 H56"/><path d="M30.2,781 V858 H37 M30.2,794.2 H37 M30.2,815.9 H37 M30.2,837 H37"/><path d="M54,580 H57"/></g>
<!-- expand boxes -->
<g fill="#fbfbfb" stroke="#9a9a9c" stroke-width="1"><rect x="6.2" y="146.8" width="9" height="9"/><rect x="6.2" y="768" width="9" height="9"/><rect x="44.6" y="575.4" width="9" height="9"/></g>
<path d="M8.2,151.3 H13.2 M8.2,772.5 H13.2" stroke="#5a5a7a" stroke-width="1.1"/>
<!-- Models icon -->
<g><path d="M22,148.4 V157 M24.2,146 V157 M26.6,148.4 V157 M28.8,150 V157" stroke="#4a4a52" stroke-width="1.4"/><path d="M21,150.6 H29.6 M21,153.4 H29.6" stroke="#7a7a82" stroke-width="0.8"/><path d="M24.2,142 V147" stroke="#d21a2a" stroke-width="1"/><path d="M20.6,151 L22,152.6 M20.6,154 L22,155.6" stroke="#d21a2a" stroke-width="0.8"/><circle cx="33.4" cy="144.6" r="1.9" fill="#fdfdfd" stroke="#2a2a2a" stroke-width="1"/><path d="M33.4,146.6 V152" stroke="#2a2a2a" stroke-width="1.1"/><path d="M31.6,150.8 L33.4,148.6 L35.2,150.8" fill="none" stroke="#2a2a2a" stroke-width="0.9"/><rect x="30.8" y="152.4" width="5.2" height="4.6" fill="#3aa83e" stroke="#1f5f22" stroke-width="0.7"/></g>
<!-- Fields icon fragment -->
<path d="M62.6,577 Q66.4,578 67.4,572" fill="none" stroke="#1a1a2a" stroke-width="1.6"/>
<!-- Amplitudes -->
<path d="M58.4,592 V609" stroke="#6a6a72" stroke-width="1.2"/><path d="M58.4,604 Q60.4,590 63.4,593.4 Q65.6,596.6 66.6,602.6 Q68.4,610.6 71.2,607.4 Q73.6,604 75,600 H69.4" fill="none" stroke="#cc2a3a" stroke-width="1.3"/>
<!-- Loads -->
<path d="M60,615.4 H64.8 V622.4 H74 V627.6 H60 Z" fill="#b4bfe2" stroke="#3a3a46" stroke-width="1.2"/><path d="M70.6,614.6 V621 M68.6,618.8 L70.6,621.4 L72.6,618.8 M68.4,617 H72.8" fill="none" stroke="#d21a2a" stroke-width="1.1"/>
<!-- BCs -->
<path d="M60,636.2 H64.8 V643.6 H74 V648.6 H60 Z" fill="#b4bfe2" stroke="#3a3a46" stroke-width="1.2"/><path d="M59,652.2 L61.4,649.4 M62,652.2 L64.4,649.4 M65,652.2 L67.4,649.4 M68,652.2 L70.4,649.4" stroke="#d21a2a" stroke-width="0.9"/>
<!-- Predefined -->
<path d="M60,657.4 H64.6 V665 H74 V670 H60 Z" fill="#e4dc5a" stroke="#3a3a46" stroke-width="1.2"/><path d="M61,668.6 V659 H63.6 V666.4 Z" fill="#5ab84a"/><path d="M66,669 H73 V666.4 H68 Z" fill="#e0783a"/>
<!-- Remeshing -->
<path d="M58.4,677.6 H64.4 L67,680.2 V689.4 H58.4 Z" fill="#fbfbfb" stroke="#2a2a32" stroke-width="1"/><path d="M60,682 H61.4 M62.6,682 H65 M60,684.4 H61.4 M62.6,684.4 H65 M60,686.8 H61.4 M62.6,686.8 H65" stroke="#2a2a32" stroke-width="0.9"/><rect x="65.6" y="686.6" width="9.2" height="8.6" fill="#a9b4d6" stroke="#2a2a3a" stroke-width="0.9"/><path d="M68.7,686.6 V695.2 M71.7,686.6 V695.2 M65.6,689.5 H74.8 M65.6,692.3 H74.8" stroke="#2a2a3a" stroke-width="0.8"/>
<!-- Optimization Tasks -->
<rect x="58.4" y="700.6" width="6" height="15" fill="#eaa838" stroke="#b0802a" stroke-width="0.7"/><path d="M66,700.6 H74.6 Q71,708 74.6,715.6 H66 Q69.4,708 66,700.6 Z" fill="#3aa04a" stroke="#1f6a2a" stroke-width="0.7"/><path d="M63,708 H68 M66.2,706.2 L68.4,708 L66.2,709.8" stroke="#d21a2a" stroke-width="1.1" fill="none"/>
<!-- Sketches -->
<path d="M61,722.6 H65.6 V731.4 H74.6 V735.6 H61 Z" fill="#f1f1f3" stroke="#3a3a46" stroke-width="1.2"/><path d="M58.6,721.4 V738 M57.4,723 H60 M57.4,736.6 H60 M60.6,738.4 H75 M62,737.2 V739.6 M74,737.2 V739.6" stroke="#d21a2a" stroke-width="0.9"/>
<!-- Annotations -->
<path d="M20.6,744 L33.4,758.4" stroke="#1a1a1a" stroke-width="1.1"/><polygon points="27.4,751.6 30.6,752 28.6,754.8" fill="#1a1a1a"/><text x="28.6" y="750.6" font-family="Liberation Sans,sans-serif" font-weight="bold" font-style="italic" font-size="8.5" fill="#1a1a1a">A</text>
<!-- Analysis -->
<g fill="#1e5aa6" stroke="#123a72" stroke-width="0.5"><path d="M21,763 H27.4 L26,765.4 H22.4 Z M21,781 H27.4 L26,778.6 H22.4 Z M20,770 H28.4 L27,767 H21.4 Z M20,774 H28.4 L27,777 H21.4 Z"/><rect x="23.4" y="764" width="1.6" height="16"/><path d="M30.6,763 H37 L35.6,765.4 H32 Z M30.6,781 H37 L35.6,778.6 H32 Z M29.6,770 H38 L36.6,767 H31 Z M29.6,774 H38 L36.6,777 H31 Z"/><rect x="33" y="764" width="1.6" height="16"/></g>
<!-- Jobs -->
<rect x="41.8" y="784.4" width="11" height="8.6" fill="#4a6ae0" stroke="#2a2a3a" stroke-width="0.9"/><rect x="45.4" y="793.2" width="4" height="2.4" fill="#3a3a46"/><rect x="39.6" y="795.8" width="15.6" height="4.6" fill="#d6d6da" stroke="#2a2a3a" stroke-width="0.9"/><path d="M41.6,798.2 H51" stroke="#4a4a52" stroke-width="0.8"/>
<!-- Adaptivity -->
<g fill="#a9b4d6" stroke="#2a2a3a" stroke-width="0.8"><rect x="38.6" y="805.8" width="7.2" height="8.4"/><rect x="48.6" y="813.4" width="7.4" height="9.4"/></g><path d="M42.2,805.8 V814.2 M38.6,810 H45.8 M52.3,813.4 V822.8 M48.6,816.6 H56 M48.6,819.6 H56" stroke="#2a2a3a" stroke-width="0.8"/><path d="M41.2,815 Q41.6,820.4 46.4,820.6" fill="none" stroke="#d21a2a" stroke-width="1.4"/><polygon points="45.6,818 48.6,820.8 45.4,823" fill="#d21a2a"/>
<!-- Co-exec -->
<g fill="#a9b4d6" stroke="#5a5a8a" stroke-width="0.7"><rect x="38.6" y="830" width="6.6" height="14"/><rect x="49.6" y="830" width="6.6" height="14"/></g><path d="M41.9,830 V844 M52.9,830 V844 M38.6,834.6 H45.2 M38.6,839.4 H45.2 M49.6,834.6 H56.2 M49.6,839.4 H56.2" stroke="#5a5a8a" stroke-width="0.7"/><path d="M45.4,834.4 H48.8 M45.4,840 H48.8" stroke="#d21a2a" stroke-width="1.3"/><polygon points="47.6,832.6 50,834.4 47.6,836.2" fill="#d21a2a"/><polygon points="47.6,838.2 50,840 47.6,841.8" fill="#d21a2a"/>
<!-- Opt proc -->
<rect x="38.8" y="851" width="7.4" height="15" fill="#eaa838" stroke="#8a6420" stroke-width="0.7"/><path d="M42.5,851 V866 M38.8,856 H46.2 M38.8,861 H46.2" stroke="#8a6420" stroke-width="0.7"/><path d="M48,851 H56 Q52.6,858.4 56,866 H48 Q51.2,858.4 48,851 Z" fill="#3aa04a" stroke="#1f6a2a" stroke-width="0.7"/><path d="M45.6,858.4 H49.4" stroke="#d21a2a" stroke-width="1.2"/><polygon points="48.4,856.6 50.8,858.4 48.4,860.2" fill="#d21a2a"/>
</svg>
<!-- dialog 2 (behind) -->
<div class="a" style="left:300px;top:263.3px;width:366.5px;height:297.6px;border-radius:8px;background:#f3f2f4;box-shadow:0 6px 22px rgba(0,0,0,0.38),0 0 1.5px rgba(0,0,0,0.5)"></div>
<svg style="left:0;top:0" width="700" height="600" viewBox="0 0 700 600"><path d="M642.8,274.4 L653.4,285 M653.4,274.4 L642.8,285" stroke="#4a4a4c" stroke-width="1.1" fill="none"/></svg>
<div class="a" style="left:340px;top:302px;width:240px;height:146.6px;box-sizing:border-box;background:#fff;border:1px solid #b8b8ba;border-top-color:#8f8f91"></div>
<div class="a" style="left:340px;top:303px;width:78.4px;height:23px;box-sizing:border-box;background:#f7f6f8;border-right:1px solid #e0e0e2;border-bottom:1px solid #e6e6e8"></div>
<span class="t" style="left:340px;top:307.4px;font-size:14px;font-weight:bold;color:#151517;transform:scaleX(0.8365)">Step-1</span>
<div class="a b2" style="left:587px;top:304.7px;width:73px;height:20px"></div>
<div class="a b2" style="left:587px;top:335px;width:73px;height:20.4px"></div>
<div class="a b2" style="left:587px;top:365.5px;width:73px;height:20.5px"></div>
<div class="a b2" style="left:587px;top:396px;width:73px;height:20.5px"></div>
<div class="a b2" style="left:587px;top:426.4px;width:73px;height:20.5px"></div>
<span class="t g" style="left:607.5px;top:307.2px;font-size:14px;transform:scaleX(0.8939)">Edit...</span>
<span class="t g" style="left:594.2px;top:337.6px;font-size:14px;transform:scaleX(0.9531)">Move Left</span>
<span class="t g" style="left:589.8px;top:368px;font-size:14px;transform:scaleX(0.9532)">Move Right</span>
<span class="t g" style="left:599.5px;top:398px;font-size:14px;transform:scaleX(0.9636)">Activate</span>
<span class="t g" style="left:592.3px;top:428.5px;font-size:14px;transform:scaleX(0.9478)">Deactivate</span>
<div class="a" style="left:340px;top:454.2px;width:320px;height:1.3px;background:#9e9ea0"></div>
<div class="a" style="left:340px;top:524.2px;width:323px;height:1.3px;background:#a8a8aa"></div>
<div class="a b2" style="left:361px;top:534.6px;width:63.5px;height:20.6px"></div>
<div class="a b2" style="left:470px;top:534.6px;width:63px;height:20.6px"></div>
<div class="a" style="left:577.8px;top:534.2px;width:63.6px;height:21.3px;box-sizing:border-box;border:1px solid #cfcfd1;border-bottom-color:#b8b8ba;border-radius:4px;background:#fefefe"></div>
<span class="t g" style="left:363.6px;top:537px;font-size:14px;transform:scaleX(0.9010)">Rename...</span>
<span class="t g" style="left:477.7px;top:537px;font-size:14px;transform:scaleX(0.8976)">Delete...</span>
<span class="t" style="left:587.3px;top:537px;font-size:14px;color:#1a1a1c;transform:scaleX(0.9184)">Dismiss</span>
<!-- dialog 1 -->
<div class="a" style="left:7.5px;top:157px;width:351.5px;height:424.2px;border-radius:8px;background:#f8f7fa;box-shadow:0 7px 22px rgba(0,0,0,0.40),0 0 1.5px rgba(0,0,0,0.55);overflow:hidden"><div class="a" style="left:0;top:0;width:352px;height:34px;background:linear-gradient(to bottom,#edf0f9,#f0f1f9)"></div></div>
<svg style="left:0;top:0" width="400" height="600" viewBox="0 0 400 600">
<path d="M334.2,168.4 L345.8,180 M345.8,168.4 L334.2,180" stroke="#2a2a2c" stroke-width="1.2" fill="none"/>
<!-- title icon -->
<g fill="#6d6cb4"><path d="M23.4,166.6 H27.8 V169 Q30.4,169.6 32.4,171.8 H18.8 Q20.8,169.6 23.4,169 Z"/><rect x="17.6" y="172.8" width="16" height="2.4" fill="#7b7ac0"/><path d="M18.8,176.2 H32.4 Q30.4,178.4 27.8,179 V181.4 H23.4 V179 Q20.8,178.4 18.8,176.2 Z"/></g>
<!-- csys icons -->
<path d="M144.6,312.6 V325.8 L147.8,322.8 L150,327.6 L152,326.6 L149.8,322 L154.4,321.6 Z" fill="#dfe8fb" stroke="#2f5fe0" stroke-width="1.3" stroke-linejoin="round"/>
<path d="M178.4,313.4 V321 L172,326.4 M178.4,321 L184.8,326.4" fill="none" stroke="#3d66c8" stroke-width="1.4"/><g fill="#3d66c8"><polygon points="178.4,311.6 180.2,315 176.6,315"/><polygon points="170.6,327.6 171.4,324.4 173.8,326.8"/><polygon points="186.2,327.6 185.4,324.4 183,326.8"/></g>
<!-- radios -->
<g fill="#fbfbfc" stroke="#8a8a8c" stroke-width="1.1"><circle cx="22" cy="348.8" r="6.6"/><circle cx="22" cy="374.8" r="6.6"/><circle cx="22" cy="400.7" r="6.6"/><circle cx="22" cy="426.6" r="6.6"/><circle cx="22" cy="452.5" r="6.6"/><circle cx="22" cy="478.5" r="6.6"/><circle cx="22" cy="504.4" r="6.6"/></g>
<circle cx="22" cy="530.3" r="7.2" fill="#0d5fbf"/><circle cx="22" cy="530.3" r="3.1" fill="#fff"/>
<rect x="33" y="520.8" width="298.5" height="18.6" fill="none" stroke="#3a3a3c" stroke-width="1" stroke-dasharray="1 1"/>
</svg>
<span class="t" style="left:41.3px;top:166.2px;font-size:14px;color:#1b1b1d;transform:scaleX(0.9616)">Edit Boundary Condition</span>
<span class="t d" style="left:15.5px;top:198.9px;transform:scaleX(0.9264)">Name:</span><span class="t d" style="left:69px;top:198.9px;transform:scaleX(0.8901)">BC-1</span>
<span class="t d" style="left:15.5px;top:225.3px;transform:scaleX(0.9197)">Type:</span><span class="t d" style="left:69px;top:225.3px;transform:scaleX(0.9795)">Symmetry/Antisymmetry/Encastre</span>
<span class="t d" style="left:15.5px;top:251.3px;transform:scaleX(0.8623)">Step:</span><span class="t d" style="left:69px;top:251.3px;transform:scaleX(0.9790)">Initial</span>
<span class="t d" style="left:15.5px;top:277.2px;transform:scaleX(0.9096)">Region:</span><span class="t d" style="left:69px;top:277.2px;transform:scaleX(0.9268)">(Picked)</span>
<div class="a" style="left:13.7px;top:299.6px;width:338.5px;height:1.3px;background:#a2a2a4"></div>
<span class="t d" style="left:15.5px;top:312px;transform:scaleX(0.7735)">CSYS:</span>
<span class="t" style="left:59.4px;top:312px;font-family:'Liberation Mono',monospace;font-size:14.5px;color:#1b1b1d;transform:scaleX(0.9996)">(Global)</span>
<span class="t d" style="left:34.2px;top:340.8px;transform:scaleX(0.9077)">XSYMM (U1 = UR2 = UR3 = 0)</span>
<span class="t d" style="left:34.2px;top:366.8px;transform:scaleX(0.9077)">YSYMM (U2 = UR1 = UR3 = 0)</span>
<span class="t d" style="left:34.2px;top:392.7px;transform:scaleX(0.9114)">ZSYMM (U3 = UR1 = UR2 = 0)</span>
<span class="t d" style="left:34.2px;top:418.6px;transform:scaleX(0.9384)">XASYMM (U2 = U3 = UR1 = 0; Abaqus/Standard only)</span>
<span class="t d" style="left:34.2px;top:444.5px;transform:scaleX(0.9413)">YASYMM (U1 = U3 = UR2 = 0; Abaqus/Standard only)</span>
<span class="t d" style="left:34.2px;top:470.5px;transform:scaleX(0.9406)">ZASYMM (U1 = U2 = UR3 = 0; Abaqus/Standard only)</span>
<span class="t d" style="left:34.2px;top:496.4px;transform:scaleX(0.9119)">PINNED (U1 = U2 = U3 = 0)</span>
<span class="t d" style="left:34.2px;top:522.3px;transform:scaleX(0.8945)">ENCASTRE (U1 = U2 = U3 = UR1 = UR2 = UR3 = 0)</span>
<div class="a" style="left:12.5px;top:545px;width:340.5px;height:1.3px;background:#a8a8aa"></div>
<div class="a" style="left:65.7px;top:553.8px;width:60px;height:22.5px;box-sizing:border-box;border:1.6px solid #1a6fc4;border-radius:4.5px;background:#e3eefb"></div>
<div class="a" style="left:239.7px;top:553.8px;width:59.2px;height:22.5px;box-sizing:border-box;border:1px solid #d2d2d4;border-bottom-color:#bcbcbe;border-radius:4.5px;background:#fefefe"></div>
<span class="t d" style="left:87.4px;top:557.2px;transform:scaleX(0.8599)">OK</span>
<span class="t d" style="left:249.7px;top:557.2px;transform:scaleX(0.9176)">Cancel</span>
<!-- mouse cursor -->
<svg style="left:0;top:0" width="400" height="620" viewBox="0 0 400 620"><path d="M113.6,561.4 V584 L118.6,579.6 L122.8,589.4 L127,587.6 L122.8,578 L129.6,577.6 Z" fill="#fff" stroke="#0a0a0a" stroke-width="1.3" stroke-linejoin="round"/></svg>
</body></html>
